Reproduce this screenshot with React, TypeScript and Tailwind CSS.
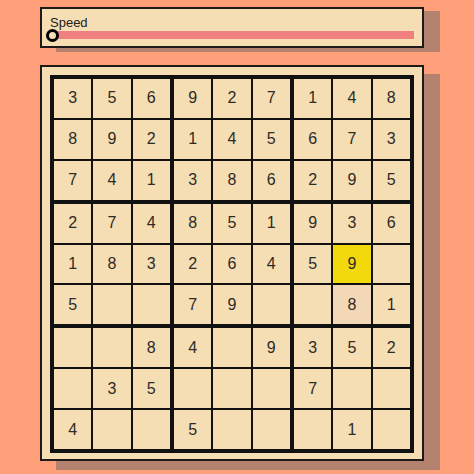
import React from "react";

const G: (number | null)[][] = [
  [3, 5, 6, 9, 2, 7, 1, 4, 8],
  [8, 9, 2, 1, 4, 5, 6, 7, 3],
  [7, 4, 1, 3, 8, 6, 2, 9, 5],
  [2, 7, 4, 8, 5, 1, 9, 3, 6],
  [1, 8, 3, 2, 6, 4, 5, 9, null],
  [5, null, null, 7, 9, null, null, 8, 1],
  [null, null, 8, 4, null, 9, 3, 5, 2],
  [null, 3, 5, null, null, null, 7, null, null],
  [4, null, null, 5, null, null, null, 1, null],
];

function cellBg(r: number, c: number) {
  if (r === 4 && c === 7) return "bg-[#f1d90c]";
  if (r === 5 && c === 7) return "bg-[#f3d8b8]";
  return "bg-[#f5deb3]";
}

export default function App() {
  const boxes = [0, 1, 2, 3, 4, 5, 6, 7, 8];
  return (
    <div
      className="min-h-screen w-full bg-[#ffa07a] pl-[40px] pt-[7px]"
      style={{ fontFamily: '"Liberation Sans", Arial, sans-serif' }}
    >
      <div className="w-[384px] border-2 border-[#1e1a18] bg-[#f5deb3] px-2 pt-[6px] pb-[7px] shadow-[16px_4px_0_0_#b3836f]">
        <div className="text-[13px] leading-[15px] text-[#222]">Speed</div>
        <div className="relative mt-[1px] h-[8px] w-full">
          <div className="h-full w-full bg-[#f08080]" />
          <div className="absolute left-[-4px] top-[-2px] h-[13px] w-[13px] rounded-full border-[3px] border-black bg-[#f5deb3]" />
        </div>
      </div>

      <div className="mt-[17px] w-[384px] border-2 border-[#1e1a18] bg-[#f5deb3] px-2 pt-2 pb-[6px] shadow-[16px_9px_0_0_#b3836f]">
        <div className="grid h-[378px] w-[364px] grid-cols-3 grid-rows-3 gap-[4px] bg-[#111] p-[4px]">
          {boxes.map((b) => {
            const br = Math.floor(b / 3);
            const bc = b % 3;
            return (
              <div key={b} className="grid grid-cols-3 grid-rows-3 gap-[2px] bg-[#111]">
                {[0, 1, 2, 3, 4, 5, 6, 7, 8].map((i) => {
                  const r = br * 3 + Math.floor(i / 3);
                  const c = bc * 3 + (i % 3);
                  const v = G[r][c];
                  return (
                    <div
                      key={i}
                      className={`flex items-center justify-center text-[16px] text-[#2e2a26] ${cellBg(r, c)}`}
                    >
                      {v ?? ""}
                    </div>
                  );
                })}
              </div>
            );
          })}
        </div>
      </div>
    </div>
  );
}
